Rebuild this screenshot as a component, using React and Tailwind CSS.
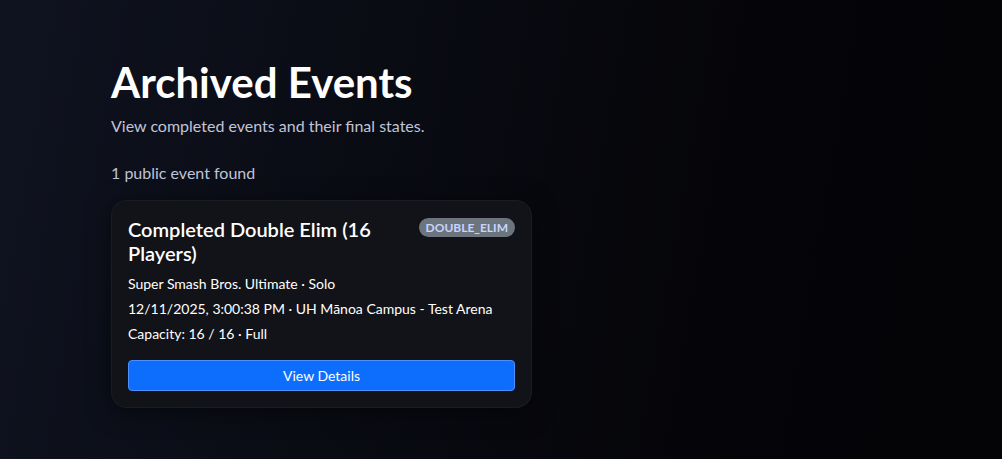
import React from 'react';

const events = [
  {
    id: 1,
    name: 'Completed Double Elim (16 Players)',
    format: 'DOUBLE_ELIM',
    game: 'Super Smash Bros. Ultimate',
    mode: 'Solo',
    date: '12/11/2025, 3:00:38 PM',
    location: 'UH Mānoa Campus - Test Arena',
    capacity: '16 / 16',
    status: 'Full',
  },
];

function EventCard({ event }) {
  return (
    <div className="w-[421px] rounded-2xl bg-[#121318] border border-white/[0.04] shadow-[0_4px_24px_rgba(0,0,0,0.5)] px-[16px] pt-[16px] pb-[16px]">
      <div className="flex items-start justify-between gap-3">
        <h5 className="text-[20px] leading-[24px] font-semibold text-white">{event.name}</h5>
        <span className="shrink-0 rounded-full bg-[#6c757d] px-[7px] h-[19px] flex items-center text-[12px] font-bold text-[#c8d3ff] mt-[1px]">
          {event.format}
        </span>
      </div>
      <div className="mt-[8px] text-[14px] leading-[21px] text-white">
        <p className="mb-[4px]">{event.game} · {event.mode}</p>
        <p className="mb-[4px]">{event.date} · {event.location}</p>
        <p>Capacity: {event.capacity} · {event.status}</p>
      </div>
      <button className="mt-[16px] w-full h-[31px] rounded-[4px] bg-[#0d6efd] border border-[#4f8ffd] text-[14px] text-white">
        View Details
      </button>
    </div>
  );
}

export default function App() {
  return (
    <div
      className="min-h-[459px] w-full bg-[linear-gradient(100deg,#0f1320_0%,#0a0c14_35%,#050509_70%,#040407_100%)] font-['Lato','Noto_Sans',sans-serif]"
    >
      <div className="px-[111px] pt-[57px] pb-[51px]">
        <h1 className="text-[42px] leading-[50px] font-bold text-white">Archived Events</h1>
        <p className="mt-[7px] text-[16px] leading-[24px] text-[#c0c4d8]">
          View completed events and their final states.
        </p>
        <p className="mt-[23px] text-[16px] leading-[24px] text-[#c0c4d8]">
          {events.length} public event found
        </p>
        <div className="mt-[15px] flex gap-6">
          {events.map((e) => (
            <EventCard key={e.id} event={e} />
          ))}
        </div>
      </div>
    </div>
  );
}
